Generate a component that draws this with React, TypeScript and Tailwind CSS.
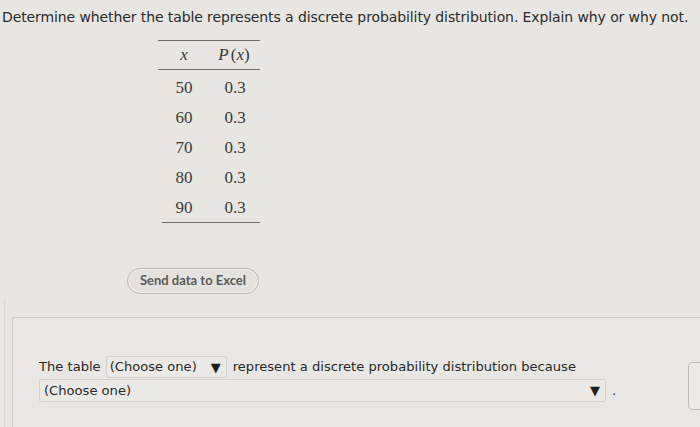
export default function App() {
  const rows = [
    [50, "0.3"],
    [60, "0.3"],
    [70, "0.3"],
    [80, "0.3"],
    [90, "0.3"],
  ];

  return (
    <div className="relative h-[427px] w-[700px] overflow-hidden bg-[#e8e6e2] text-[#2b2b2b] [font-family:'DejaVu_Sans',sans-serif]">
      <p className="pl-[2px] pt-[8px] text-[14px] leading-[18px] tracking-[-0.1px]">
        Determine whether the table represents a discrete probability distribution. Explain why or why not.
      </p>

      <div className="ml-[158px] mt-[14px] w-[102px] [font-family:'Liberation_Serif',serif] text-[17px] text-[#3a3a3a]">
        <div className="border-t-[1.5px] border-[#6e6e6e]" />
        <div className="flex h-[29px] items-center border-b-[1.5px] border-[#6e6e6e]">
          <span className="w-[50px] pl-[2px] text-center italic">x</span>
          <span className="w-[52px] text-center">
            <i>P</i>
            <span className="ml-[2px]">(</span>
            <i>x</i>)
          </span>
        </div>
        <div className="pt-[3px]">
          {rows.map(([x, p]) => (
            <div key={x} className="flex h-[30px] items-center">
              <span className="w-[52px] text-center">{x}</span>
              <span className="w-[50px] text-center">{p}</span>
            </div>
          ))}
        </div>
        <div className="ml-[4px] mt-[-1px] border-t-[1.5px] border-[#6e6e6e]" />
      </div>

      <div className="ml-[127px] mt-[45px] flex h-[26px] w-[132px] items-center justify-center rounded-full border border-[#b9b7b3] bg-[#e4e2de] shadow-[inset_0_0_0_1px_#f2f1ee] [font-family:Lato,sans-serif] text-[13px] font-bold text-[#5a5a5a]">
        Send data to Excel
      </div>

      <div className="ml-[12px] mt-[23px] h-[140px] w-[720px] border-l border-t border-[#cfcdc9] bg-[#e9e7e3] pl-[26px] pt-[38px] text-[13.1px] text-[#2a2a2a]">
        <div className="flex items-center">
          <span>The table</span>
          <span className="ml-[5px] flex h-[22px] w-[121px] items-center justify-between rounded-[2px] border border-[#d4d2ce] bg-[#ebe9e5] pl-[3px] pr-[5px]">
            <span>(Choose one)</span>
            <span className="text-[13px] leading-none text-[#1e1e1e]">▼</span>
          </span>
          <span className="ml-[6px]">represent a discrete probability distribution because</span>
        </div>
        <div className="mt-[1px] flex items-center">
          <span className="flex h-[23px] w-[567px] items-center justify-between rounded-[2px] border border-[#d4d2ce] bg-[#ebe9e5] pl-[4px] pr-[5px]">
            <span>(Choose one)</span>
            <span className="text-[13px] leading-none text-[#1e1e1e]">▼</span>
          </span>
          <span className="ml-[6px]">.</span>
        </div>
      </div>

      <div className="absolute left-[688px] top-[362px] h-[48px] w-[20px] rounded-[4px] border-[1.5px] border-[#bdbbb7] bg-[#ecebe8]" />
      <div className="absolute left-[4px] top-[300px] h-[127px] w-px bg-[#d8d6d2]" />
    </div>
  );
}
